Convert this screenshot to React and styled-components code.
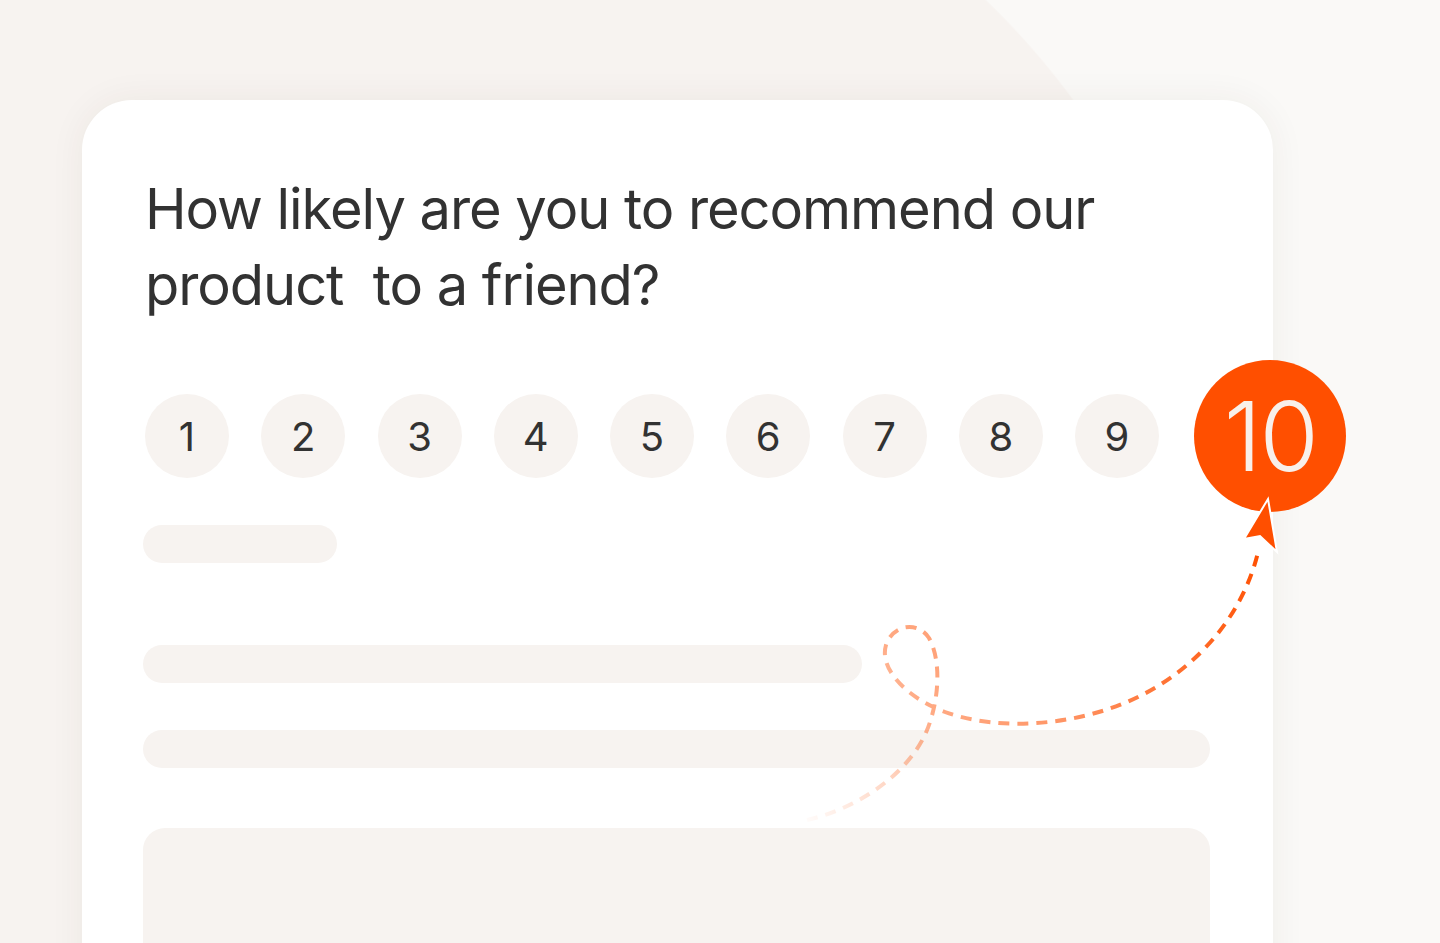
import React from 'react';
import styled, { createGlobalStyle } from 'styled-components';

const GlobalStyle = createGlobalStyle`
  html, body {
    margin: 0;
    padding: 0;
  }
  body {
    font-family: Inter, "Noto Sans", "Liberation Sans", sans-serif;
    color: #323232;
  }
`;

const scores = [1, 2, 3, 4, 5, 6, 7, 8, 9];

const Trail = () => (
    <TrailSvg viewBox="0 0 1440 943" width="1440" height="943">
        <defs>
            <linearGradient id="trail" gradientUnits="userSpaceOnUse" x1="807" y1="820" x2="1262" y2="545">
                <stop offset="0" stopColor="#ff4f00" stopOpacity="0.02" />
                <stop offset="0.16" stopColor="#ff4f00" stopOpacity="0.22" />
                <stop offset="0.3" stopColor="#ff4f00" stopOpacity="0.48" />
                <stop offset="0.5" stopColor="#ff4f00" stopOpacity="0.6" />
                <stop offset="0.72" stopColor="#ff4f00" stopOpacity="0.8" />
                <stop offset="1" stopColor="#ff4f00" stopOpacity="1" />
            </linearGradient>
        </defs>
        <path
            d="M 807 820 C 860 808 915 770 930 722 C 939 695 941 660 929 638 C 918 621 893 624 886 645 C 879 668 905 697 945 712 C 1000 732 1080 726 1140 696 C 1200 666 1245 612 1259 548"
            fill="none"
            stroke="url(#trail)"
            strokeWidth="4"
            strokeDasharray="11 8"
        />
        <path
            d="M 1268 499 L 1277 552 L 1260 536 L 1244 539 Z"
            fill="#ff4f00"
            stroke="#ffffff"
            strokeWidth="2"
            strokeLinejoin="miter"
        />
    </TrailSvg>
);

const App = () => {
    return (
        <Stage>
            <GlobalStyle />
            <Card>
                <Question>
                    How likely are you to recommend our
                    <br />
                    {'product\u00a0 to a friend?'}
                </Question>
                <Scale>
                    {scores.map((n) => (
                        <Score key={n}>{n}</Score>
                    ))}
                    <Picked>10</Picked>
                </Scale>
                <Bar width="194px" gap="13px" />
                <Bar width="719px" gap="82px" />
                <Bar width="1067px" gap="47px" />
                <Field />
            </Card>
            <Trail />
        </Stage>
    );
};

export default App;

const Stage = styled.div`
position: relative;
height: 943px;
overflow: hidden;
box-sizing: border-box;
padding: 100px 0 0 82px;
background:
    linear-gradient(to right, #f7f3f0 0 600px, transparent 600px),
    radial-gradient(ellipse 733px 800px at 502px 600px, #f7f3f0 99.8%, #faf9f7 100%);
`;

const Card = styled.div`
width: 1191px;
min-height: 900px;
box-sizing: border-box;
padding: 71px 0 0 61px;
background: #ffffff;
border-radius: 50px;
box-shadow: 0 0 36px rgba(60, 50, 40, 0.06);
display: flex;
flex-direction: column;
`;

const Question = styled.h1`
margin: 0 0 0 2px;
font-size: 56px;
line-height: 76px;
font-weight: 400;
letter-spacing: -1.05px;
color: #323232;
white-space: pre-wrap;
`;

const Scale = styled.div`
display: flex;
align-items: center;
gap: 32.25px;
margin-top: 37px;
margin-left: 2px;
height: 152px;
flex: none;
`;

const Score = styled.div`
width: 84px;
height: 84px;
flex: none;
border-radius: 50%;
background: #f7f3f0;
display: flex;
align-items: center;
justify-content: center;
font-size: 40px;
font-weight: 400;
color: #323232;
`;

const Picked = styled(Score)`
width: 152px;
height: 152px;
margin-left: 3px;
background: #ff4f00;
color: #f8f0ea;
font-size: 96px;
font-weight: 300;
letter-spacing: -2px;
`;

const Bar = styled.div`
width: ${(p) => p.width};
height: 38px;
flex: none;
margin-top: ${(p) => p.gap};
border-radius: 19px;
background: #f7f3f0;
`;

const Field = styled.div`
width: 1067px;
height: 240px;
flex: none;
margin-top: 60px;
border-radius: 22px;
background: #f7f3f0;
`;

const TrailSvg = styled.svg`
position: absolute;
left: 0;
top: 0;
pointer-events: none;
`;
